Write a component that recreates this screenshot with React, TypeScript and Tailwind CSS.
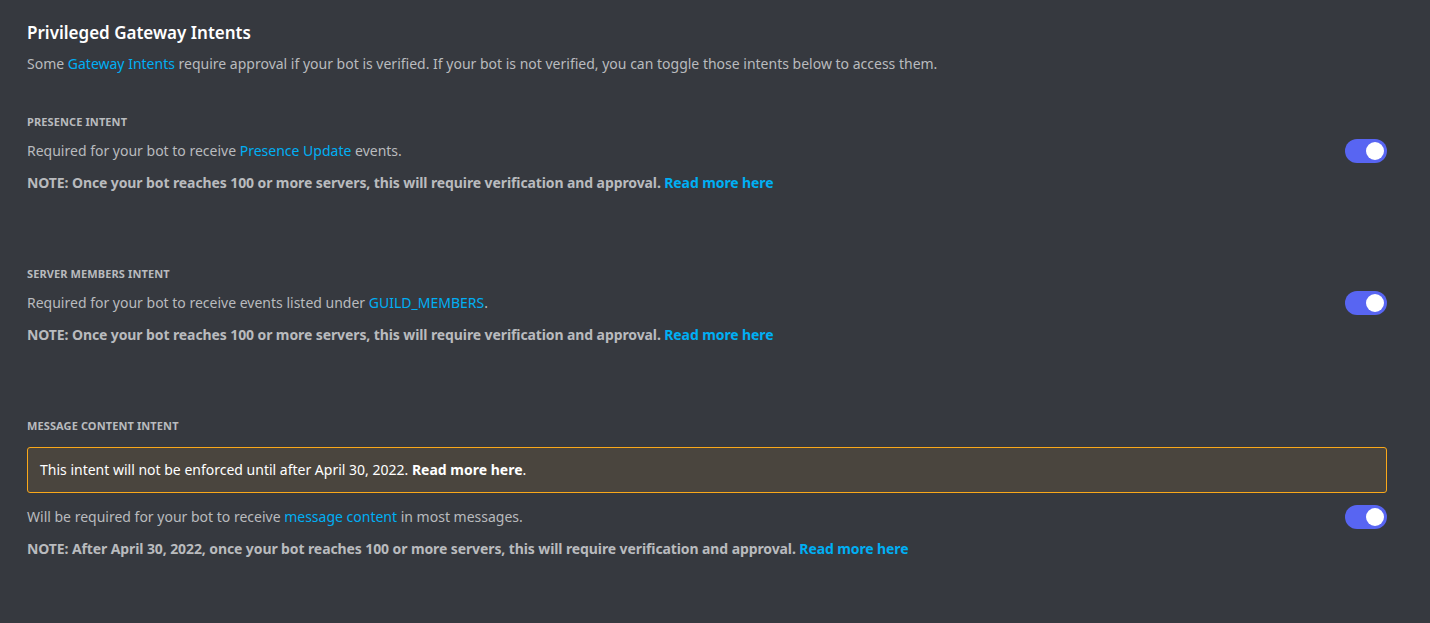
const FONT = { fontFamily: '"Noto Sans", "Open Sans", sans-serif' };

function Toggle() {
  return (
    <div className="relative h-6 w-[42px] shrink-0 rounded-full bg-[#5865f2]">
      <div className="absolute top-[3px] right-[3px] size-[18px] rounded-full bg-white" />
    </div>
  );
}

function Link({ children, bold }: { children: React.ReactNode; bold?: boolean }) {
  return (
    <a className={`text-[#00aff4] ${bold ? "font-bold" : ""}`} href="#">
      {children}
    </a>
  );
}

function Intent({
  title,
  desc,
  note,
  warning,
  className,
}: {
  title: string;
  desc: React.ReactNode;
  note: string;
  warning?: React.ReactNode;
  className?: string;
}) {
  return (
    <section className={className}>
      <h3 className="text-[11px] leading-4 font-bold tracking-[0.01em] text-[#b9bbbe] uppercase">
        {title}
      </h3>
      {warning && (
        <div className="mt-[13px] flex h-[46px] items-center rounded-[3px] border border-[#faa81a] bg-[#4a453e] px-3 text-sm text-white">
          {warning}
        </div>
      )}
      <div className={`${warning ? "mt-[12px]" : "mt-[9px]"} flex items-center justify-between`}>
        <p className="text-sm leading-5 text-[#b9bbbe]">{desc}</p>
        <Toggle />
      </div>
      <p className="mt-[10px] text-sm leading-5 font-bold tracking-[-0.1px] text-[#b9bbbe]">
        {note} <Link bold>Read more here</Link>
      </p>
    </section>
  );
}

export default function App() {
  return (
    <div className="h-[623px] w-full bg-[#36393f] pt-[23px] pr-[43px] pl-[27px]" style={FONT}>
      <h2 className="text-[17px] leading-5 font-semibold text-white">Privileged Gateway Intents</h2>
      <p className="mt-[11px] text-sm leading-5 text-[#b9bbbe]">
        Some <Link>Gateway Intents</Link> require approval if your bot is verified. If your bot is not
        verified, you can toggle those intents below to access them.
      </p>

      <Intent
        className="mt-[40px]"
        title="Presence Intent"
        desc={
          <>
            Required for your bot to receive <Link>Presence Update</Link> events.
          </>
        }
        note="NOTE: Once your bot reaches 100 or more servers, this will require verification and approval."
      />

      <Intent
        className="mt-[73px]"
        title="Server Members Intent"
        desc={
          <>
            Required for your bot to receive events listed under <Link>GUILD_MEMBERS</Link>.
          </>
        }
        note="NOTE: Once your bot reaches 100 or more servers, this will require verification and approval."
      />

      <Intent
        className="mt-[73px]"
        title="Message Content Intent"
        warning={
          <span>
            This intent will not be enforced until after April 30, 2022.{" "}
            <span className="font-bold">Read more here</span>.
          </span>
        }
        desc={
          <>
            Will be required for your bot to receive <Link>message content</Link> in most messages.
          </>
        }
        note="NOTE: After April 30, 2022, once your bot reaches 100 or more servers, this will require verification and approval."
      />
    </div>
  );
}
